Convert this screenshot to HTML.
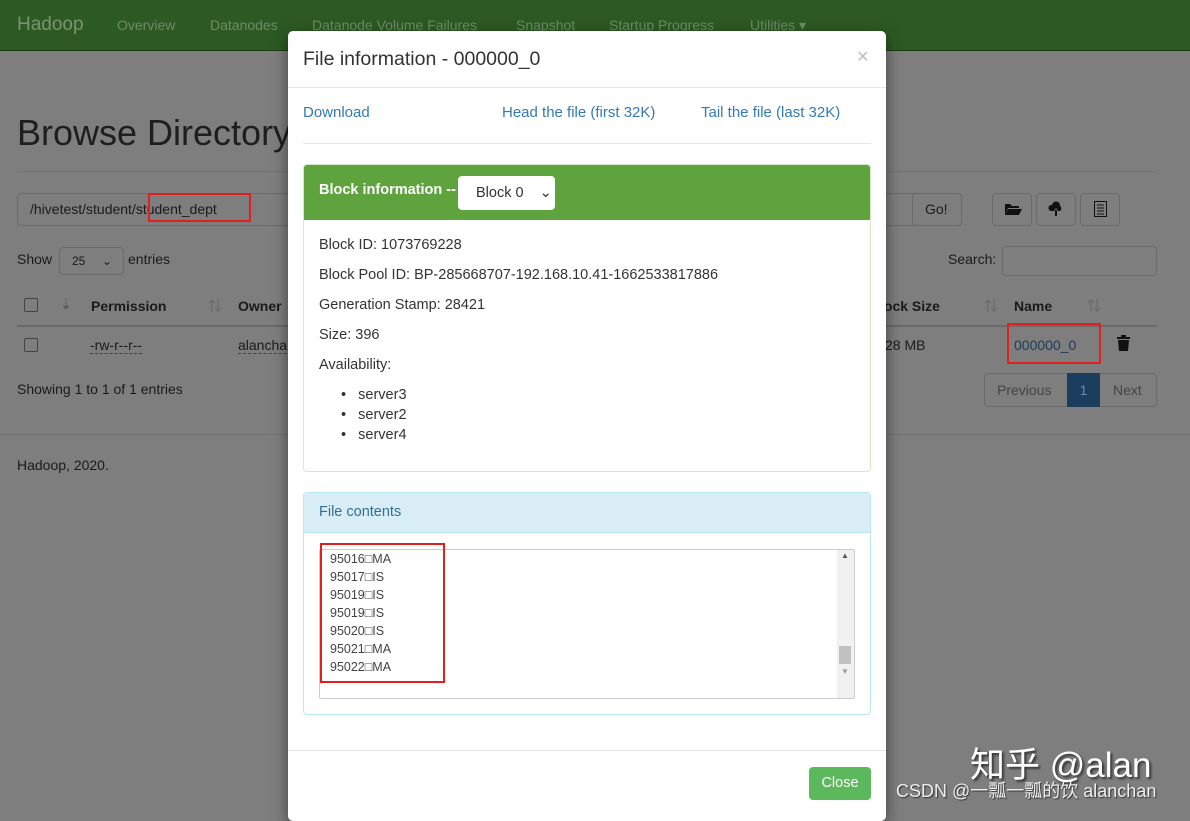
<!DOCTYPE html>
<html><head><meta charset="utf-8"><style>
*{box-sizing:border-box;margin:0;padding:0}
body{width:1190px;height:809px;overflow:hidden;background:#7e7e7e;font-family:"Liberation Sans","Noto Sans CJK SC",sans-serif;font-size:14px;color:#1a1a1a;position:relative}
.a{position:absolute;white-space:nowrap}
.nav{left:0;top:0;width:1190px;height:51px;background:#2c5a22;border-bottom:1px solid #1a3a14}
.nav span{position:absolute;top:17px;color:#6f8a68;font-size:14px}
.bx{position:absolute;border:1px solid #6a6a6a;border-radius:4px}
.modal{left:288px;top:31px;width:598px;height:790px;background:#fff;border-radius:5px;box-shadow:0 5px 15px rgba(0,0,0,.5);font-size:14.5px}
.lnk{color:#337ab7;font-size:15px}
.red{position:absolute;border:2px solid #e0201c}
</style></head><body>
<div class="a nav">
<span style="left:17px;top:14px;font-size:19px;color:#7a9472">Hadoop</span>
<span style="left:117px">Overview</span><span style="left:210px">Datanodes</span><span style="left:312px">Datanode Volume Failures</span><span style="left:516px">Snapshot</span><span style="left:609px">Startup Progress</span><span style="left:750px">Utilities ▾</span>
</div>
<div class="a" style="left:17px;top:112px;font-size:36px;color:#1e1e1e">Browse Directory</div>
<div class="a" style="left:17px;top:171px;width:1140px;border-top:1px solid #727272"></div>
<div class="bx" style="left:17px;top:193px;width:945px;height:33px"></div>
<div class="a" style="left:30px;top:201px;font-size:14px">/hivetest/student/student_dept</div>
<div class="red" style="left:148px;top:193px;width:103px;height:29px"></div>
<div class="bx" style="left:912px;top:193px;width:50px;height:33px"></div><div class="a" style="left:925px;top:201px">Go!</div>
<div class="bx" style="left:992px;top:193px;width:40px;height:33px"></div>
<svg class="a" style="left:1004px;top:202px" width="18" height="14" viewBox="0 0 18 14"><path d="M1 2h5l2 2h7v2H4L1 13z M4 7h14l-3 6H1z" fill="#111"/></svg>
<div class="bx" style="left:1036px;top:193px;width:40px;height:33px"></div>
<svg class="a" style="left:1047px;top:200px" width="18" height="18" viewBox="0 0 18 18"><path d="M4 11a3 3 0 0 1 1-6 4 4 0 0 1 8 1 3 3 0 0 1 0 5h-2l-2-3-2 3zM8 10h2v6H8z" fill="#111"/></svg>
<div class="bx" style="left:1080px;top:193px;width:40px;height:33px"></div>
<svg class="a" style="left:1094px;top:201px" width="13" height="16" viewBox="0 0 13 16"><rect x="0.5" y="0.5" width="12" height="15" fill="none" stroke="#111"/><path d="M3 4h7M3 7h7M3 10h7M3 13h7" stroke="#111"/></svg>
<div class="a" style="left:17px;top:251px">Show</div>
<div class="bx" style="left:59px;top:247px;width:65px;height:28px"></div><div class="a" style="left:72px;top:254px;font-size:12px">25 &nbsp;&nbsp;&nbsp;&nbsp;⌄</div>
<div class="a" style="left:128px;top:251px">entries</div>
<div class="a" style="left:948px;top:251px">Search:</div>
<div class="bx" style="left:1002px;top:246px;width:155px;height:30px"></div>
<div class="a" style="left:24px;top:298px;width:14px;height:14px;border:1px solid #444;border-radius:2px"></div>
<div class="a" style="left:60px;top:296px;color:#555">⇣</div>
<div class="a" style="left:91px;top:298px;font-weight:bold">Permission</div>
<div class="a" style="left:208px;top:296px;color:#666">⇅</div>
<div class="a" style="left:238px;top:298px;font-weight:bold">Owner</div>
<div class="a" style="left:880px;top:298px;font-weight:bold">lock Size</div>
<div class="a" style="left:984px;top:296px;color:#666">⇅</div>
<div class="a" style="left:1014px;top:298px;font-weight:bold">Name</div>
<div class="a" style="left:1087px;top:296px;color:#666">⇅</div>
<div class="a" style="left:17px;top:325px;width:1140px;border-top:2px solid #6a6a6a"></div>
<div class="a" style="left:24px;top:338px;width:14px;height:14px;border:1px solid #444;border-radius:2px"></div>
<div class="a" style="left:90px;top:337px;border-bottom:1px dashed #2a4a5a">-rw-r--r--</div>
<div class="a" style="left:238px;top:337px;border-bottom:1px dashed #2a4a5a">alancha</div>
<div class="a" style="left:885px;top:337px">28 MB</div>
<div class="a" style="left:1014px;top:337px;color:#1c3c5a">000000_0</div>
<div class="red" style="left:1007px;top:323px;width:94px;height:41px"></div>
<svg class="a" style="left:1117px;top:335px" width="13" height="16" viewBox="0 0 13 16"><path d="M0 2h13v2H0zM4 0h5v2H4zM1 5h11l-1 11H2z" fill="#111"/></svg>
<div class="a" style="left:17px;top:381px">Showing 1 to 1 of 1 entries</div>
<div class="bx" style="left:984px;top:373px;width:173px;height:34px"></div>
<div class="a" style="left:997px;top:382px;color:#444">Previous</div>
<div class="a" style="left:1067px;top:373px;width:33px;height:34px;background:#1b3d5e;color:#6a8aa8;text-align:center;padding-top:9px">1</div>
<div class="a" style="left:1113px;top:382px;color:#444">Next</div>
<div class="a" style="left:0;top:434px;width:1190px;border-top:1px solid #727272"></div>
<div class="a" style="left:17px;top:457px">Hadoop, 2020.</div>

<div class="a modal">
<div class="a" style="left:15px;top:17px;font-size:19.5px;color:#333">File information - 000000_0</div>
<div class="a" style="left:569px;top:15px;font-size:20px;color:#bbb">×</div>
<div class="a" style="left:0;top:56px;width:598px;border-top:1px solid #e5e5e5"></div>
<div class="a lnk" style="left:15px;top:73px">Download</div>
<div class="a lnk" style="left:214px;top:73px">Head the file (first 32K)</div>
<div class="a lnk" style="left:413px;top:73px">Tail the file (last 32K)</div>
<div class="a" style="left:15px;top:112px;width:568px;border-top:1px solid #e5e5e5"></div>
<div class="a" style="left:15px;top:133px;width:568px;height:308px;border:1px solid #d6e9c6;border-radius:4px"></div>
<div class="a" style="left:16px;top:134px;width:566px;height:55px;background:#5fa33f;border-radius:3px 3px 0 0"></div>
<div class="a" style="left:31px;top:151px;color:#fff;font-weight:bold;font-size:14.5px">Block information --</div>
<div class="a" style="left:170px;top:145px;width:97px;height:34px;background:#fff;border-radius:4px;padding:9px 0 0 18px;color:#333">Block 0 &nbsp;&nbsp;&nbsp;⌄</div>
<div class="a" style="left:31px;top:199px;color:#333;line-height:30px">Block ID: 1073769228<br>Block Pool ID: BP-285668707-192.168.10.41-1662533817886<br>Generation Stamp: 28421<br>Size: 396<br>Availability:</div>
<div class="a" style="left:53px;top:354px;color:#333;line-height:20px">•&nbsp;&nbsp;&nbsp;server3<br>•&nbsp;&nbsp;&nbsp;server2<br>•&nbsp;&nbsp;&nbsp;server4</div>
<div class="a" style="left:15px;top:461px;width:568px;height:223px;border:1px solid #bce8f1;border-radius:4px"></div>
<div class="a" style="left:16px;top:462px;width:566px;height:40px;background:#d9edf7;border-bottom:1px solid #bce8f1"></div>
<div class="a" style="left:31px;top:473px;color:#31708f">File contents</div>
<div class="a" style="left:31px;top:518px;width:536px;height:150px;border:1px solid #ccc;border-radius:2px"></div>
<div class="a" style="left:549px;top:519px;width:17px;height:148px;background:#f1f1f1"></div>
<div class="a" style="left:551px;top:615px;width:12px;height:18px;background:#c1c1c1"></div>
<div class="a" style="left:553px;top:520px;font-size:8px;color:#555">▲</div>
<div class="a" style="left:553px;top:636px;font-size:8px;color:#999">▼</div>
<div class="a" style="left:42px;top:519px;font-size:12.5px;line-height:18px;color:#444">95016□MA<br>95017□IS<br>95019□IS<br>95019□IS<br>95020□IS<br>95021□MA<br>95022□MA</div>
<div class="red" style="left:32px;top:512px;width:125px;height:140px"></div>
<div class="a" style="left:0;top:719px;width:598px;border-top:1px solid #e5e5e5"></div>
<div class="a" style="left:521px;top:736px;width:62px;height:33px;background:#5cb85c;border-radius:4px;color:#fff;text-align:center;padding-top:8px;font-size:14.5px">Close</div>
</div>
<div class="a" style="left:970px;top:737px;font-size:35px;color:#fff;text-shadow:2px 2px 2px #333">知乎 @alan</div>
<div class="a" style="left:896px;top:777px;font-size:18px;color:#eee;text-shadow:1px 1px 1px #333">CSDN @一瓢一瓢的饮 alanchan</div>
</body></html>
